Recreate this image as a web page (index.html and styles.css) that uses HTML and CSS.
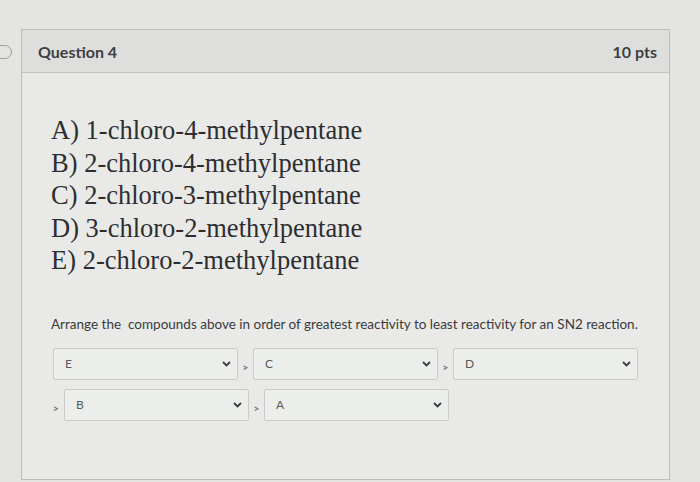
FILE: index.html
```html
<!DOCTYPE html>
<html>
<head>
<meta charset="utf-8">
<link rel="stylesheet" href="styles.css">
</head>
<body>
<div class="page">
  <div class="pin"></div>
  <div class="card">
    <div class="card-head">
      <span class="q-title">Question 4</span>
      <span class="q-pts">10 pts</span>
    </div>
    <div class="card-body">
      <div class="options">
        <div class="opt">A) 1-chloro-4-methylpentane</div>
        <div class="opt">B) 2-chloro-4-methylpentane</div>
        <div class="opt">C) 2-chloro-3-methylpentane</div>
        <div class="opt">D) 3-chloro-2-methylpentane</div>
        <div class="opt">E) 2-chloro-2-methylpentane</div>
      </div>
      <p class="prompt">Arrange the&nbsp; compounds above in order of greatest reactivity to least reactivity for an SN2 reaction.</p>
      <div class="answers">
        <div class="sel"><span>E</span><svg class="chev" viewBox="0 0 9 6"><polyline points="1,1 4.5,4.5 8,1"/></svg></div>
        <div class="sep">&gt;</div>
        <div class="sel"><span>C</span><svg class="chev" viewBox="0 0 9 6"><polyline points="1,1 4.5,4.5 8,1"/></svg></div>
        <div class="sep">&gt;</div>
        <div class="sel"><span>D</span><svg class="chev" viewBox="0 0 9 6"><polyline points="1,1 4.5,4.5 8,1"/></svg></div>
        <div class="sep sep-lead">&gt;</div>
        <div class="sel"><span>B</span><svg class="chev" viewBox="0 0 9 6"><polyline points="1,1 4.5,4.5 8,1"/></svg></div>
        <div class="sep">&gt;</div>
        <div class="sel"><span>A</span><svg class="chev" viewBox="0 0 9 6"><polyline points="1,1 4.5,4.5 8,1"/></svg></div>
      </div>
    </div>
  </div>
</div>
</body>
</html>
```
FILE: styles.css
```css
html, body {
  margin: 0;
  padding: 0;
  background: #e4e5e3;
  overflow: hidden;
}
.page {
  display: flex;
  align-items: flex-start;
  padding-top: 29px;
  height: 482px;
  box-sizing: border-box;
}
.pin {
  flex: none;
  width: 20px;
  height: 12px;
  margin-left: -10px;
  margin-top: 16px;
  margin-right: 9px;
  border: 1.5px solid #9fa09e;
  border-radius: 7px;
}
.card {
  flex: none;
  width: 647px;
  border: 1px solid #bdbebc;
  background: #e9eae8;
}
.card-head {
  display: flex;
  justify-content: space-between;
  align-items: center;
  height: 42px;
  padding: 0 12px 0 16px;
  background: #dedfdd;
  border-bottom: 1px solid #c3c4c2;
  font-family: Lato, "Liberation Sans", sans-serif;
  font-weight: bold;
  font-size: 16px;
  color: #3e3f44;
}
.card-body {
  padding: 41px 28px 58px 29px;
}
.options {
  font-family: "Liberation Serif", "Times New Roman", serif;
  font-size: 26.5px;
  line-height: 32.5px;
  color: #2e2e31;
}
.prompt {
  margin: 38px 0 0 0;
  font-family: Lato, "Liberation Sans", sans-serif;
  font-size: 13.5px;
  line-height: 18px;
  color: #3a3b3d;
}
.answers {
  display: flex;
  flex-wrap: wrap;
  row-gap: 9px;
  width: 590px;
  margin: 15px 0 0 2px;
}
.sel {
  box-sizing: border-box;
  width: 185px;
  height: 32px;
  display: flex;
  align-items: center;
  justify-content: space-between;
  padding: 0 6px 0 11px;
  border: 1px solid #cbccca;
  border-radius: 2px;
  background: #eceeec;
  font-family: Lato, "Liberation Sans", sans-serif;
  font-size: 12px;
  color: #5a5b5d;
}
.chev {
  width: 9px;
  height: 6px;
  fill: none;
  stroke: #3a3b3d;
  stroke-width: 1.8;
}
.sep {
  width: 15px;
  text-align: center;
  padding-top: 6px;
  align-self: center;
  font-family: Lato, "Liberation Sans", sans-serif;
  font-weight: bold;
  font-size: 10px;
  color: #6a6b6d;
}
.sep-lead {
  width: 11px;
  text-align: left;
}
```
